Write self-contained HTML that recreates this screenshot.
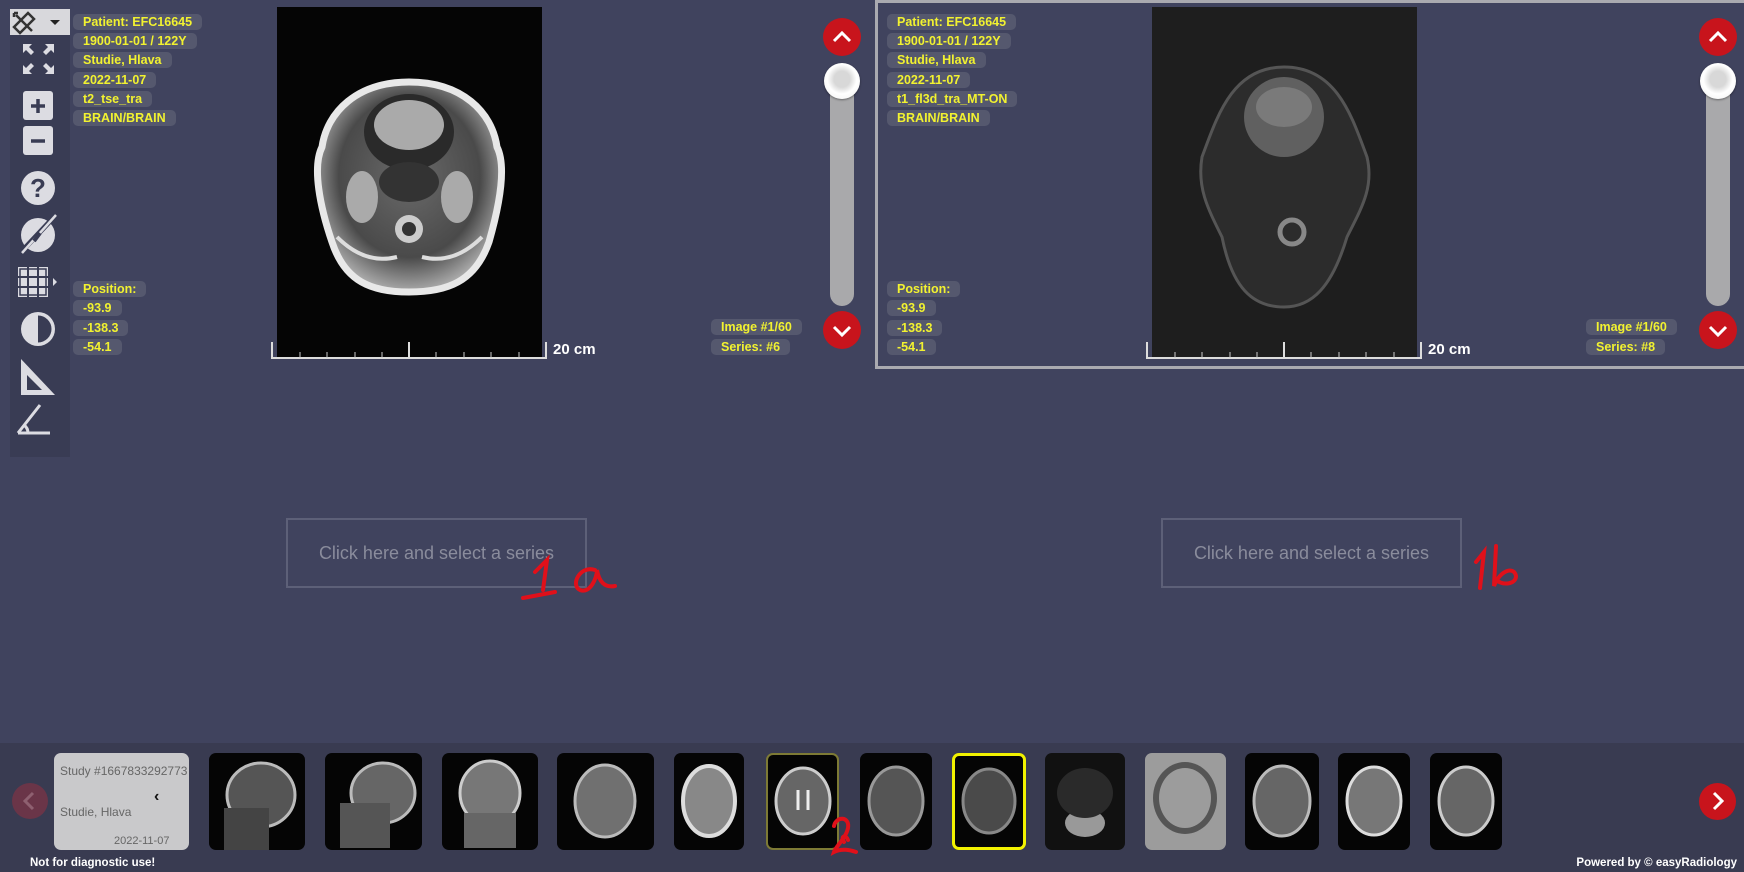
<!DOCTYPE html>
<html><head><meta charset="utf-8">
<style>
*{margin:0;padding:0;box-sizing:border-box}
body{width:1744px;height:872px;background:#40435e;font-family:"Liberation Sans",sans-serif;position:relative;overflow:hidden}
.abs{position:absolute}
.lbl{position:absolute;height:16px;line-height:16px;padding:0 10px;background:#55586e;border-radius:5px;color:#f2f230;font-size:12.5px;font-weight:bold;white-space:nowrap}
.tb{position:absolute;left:10px;top:9px;width:60px;height:448px;background:#393c54}
.red{position:absolute;width:38px;height:38px;border-radius:50%;background:#c8141c}
.track{position:absolute;width:24px;background:#a9a9ab;border-radius:12px}
.thumb{position:absolute;width:36px;height:36px;border-radius:50%;background:radial-gradient(circle at 50% 45%,#d8d8d8 0 30%,#fff 55%,#eee);box-shadow:0 1px 2px #0006}
.ph{position:absolute;width:301px;height:70px;border:2px solid #5d6078;color:#8a8c9c;font-size:18px;line-height:66px;text-align:center}
.bot{position:absolute;left:0;top:743px;width:1744px;height:129px;background:#393b51}
.th{position:absolute;top:753px;height:97px;border-radius:7px;background:#050505;overflow:hidden}
</style></head><body>

<div class="tb">
 <div class="abs" style="left:0;top:0;width:60px;height:26px;background:#d8d8dc"></div>
 <svg class="abs" style="left:0;top:0" width="60" height="448" viewBox="0 0 60 448">
  <g stroke="#333" stroke-width="2.5" fill="none"><path d="M4 18 L18 4 L24 10 L10 24Z"/><path d="M6 6 L22 22"/><path d="M4 4 l4 0 M4 4 l0 4"/></g>
  <path d="M40 11 h10 l-5 5z" fill="#222"/>
  <g fill="#dcdce2">
   <path d="M13 35 h9 l-3 3 5 5 -3 3 -5 -5 -3 3z"/><path d="M44 35 h-9 l3 3 -5 5 3 3 5 -5 3 3z"/>
   <path d="M13 65 h9 l-3 -3 5 -5 -3 -3 -5 5 -3 -3z"/><path d="M44 65 h-9 l3 -3 -5 -5 3 -3 5 5 3 -3z"/>
   <rect x="13" y="82" width="30" height="29" rx="3"/><rect x="13" y="117" width="30" height="29" rx="3"/>
   <circle cx="28" cy="179" r="17"/><circle cx="28" cy="226" r="17"/>
   <rect x="8" y="258" width="30" height="30"/>
   <circle cx="28" cy="320" r="17"/>
   <path d="M11 350 L45 386 H11Z"/>
  </g>
  <g stroke="#393c54" stroke-width="3.5" fill="none"><path d="M28 90 v14 M21 97 h14"/><path d="M21 132 h14"/></g>
  <text x="28" y="188" text-anchor="middle" font-size="26" font-weight="bold" fill="#393c54" font-family="Liberation Sans">?</text>
  <path d="M14 240 L44 208" stroke="#393c54" stroke-width="5"/><path d="M12 244 L46 206" stroke="#dcdce2" stroke-width="2.5"/>
  <path d="M24 232 l6 -8" stroke="#393c54" stroke-width="4"/>
  <g stroke="#393c54" stroke-width="2"><path d="M18 258 v30 M28 258 v30 M8 268 h30 M8 278 h30"/></g>
  <rect x="10" y="260" width="26" height="26" fill="none" stroke="#393c54" stroke-width="1.5"/>
  <path d="M43 269 l4 4 -4 4z" fill="#dcdce2"/>
  <path d="M28 305 a15 15 0 0 1 0 30z" fill="#393c54"/><circle cx="28" cy="320" r="15" fill="none" stroke="#dcdce2" stroke-width="3"/>
  <path d="M17 366 L32 381 H17Z" fill="#393c54"/>
  <path d="M8 424 L30 396 M8 424 H40 M18 424 a10 10 0 0 0 -4 -8" stroke="#dcdce2" stroke-width="3" fill="none"/>
 </svg>
</div>

<div class="lbl" style="left:73px;top:14px">Patient: EFC16645</div>
<div class="lbl" style="left:73px;top:33px">1900-01-01 / 122Y</div>
<div class="lbl" style="left:73px;top:52px">Studie, Hlava</div>
<div class="lbl" style="left:73px;top:72px">2022-11-07</div>
<div class="lbl" style="left:73px;top:91px">t2_tse_tra</div>
<div class="lbl" style="left:73px;top:110px">BRAIN/BRAIN</div>
<div class="lbl" style="left:73px;top:281px">Position:</div>
<div class="lbl" style="left:73px;top:300px">-93.9</div>
<div class="lbl" style="left:73px;top:320px">-138.3</div>
<div class="lbl" style="left:73px;top:339px">-54.1</div>

<svg class="abs" style="left:277px;top:7px" width="265" height="351" viewBox="0 0 265 351">
 <defs><radialGradient id="g1" cx="50%" cy="45%" r="55%"><stop offset="0" stop-color="#6a6a6a"/><stop offset=".7" stop-color="#4a4a4a"/><stop offset="1" stop-color="#aaa"/></radialGradient></defs>
 <rect width="265" height="351" fill="#050505"/>
 <path d="M132 75 C185 75 215 105 220 140 C230 160 222 200 212 235 C198 275 170 285 132 285 C95 285 68 275 55 235 C43 200 35 160 45 140 C50 105 80 75 132 75Z" fill="url(#g1)" stroke="#e8e8e8" stroke-width="7"/>
 <ellipse cx="132" cy="125" rx="45" ry="38" fill="#2a2a2a"/>
 <ellipse cx="132" cy="118" rx="35" ry="25" fill="#aaa"/>
 <ellipse cx="132" cy="175" rx="30" ry="20" fill="#333"/>
 <circle cx="132" cy="222" r="14" fill="#ccc"/><circle cx="132" cy="222" r="7" fill="#333"/>
 <ellipse cx="85" cy="190" rx="16" ry="26" fill="#aaa"/><ellipse cx="180" cy="190" rx="16" ry="26" fill="#aaa"/>
 <path d="M60 230 C80 250 100 255 120 250 M205 230 C185 250 165 255 145 250" stroke="#ddd" stroke-width="4" fill="none"/>
</svg>
<svg class="abs" style="left:270px;top:340px" width="280" height="20"><g stroke="#ddd" stroke-width="2" fill="none"><path d="M2 2 V18 H276 V2"/><path d="M139 2V18"/></g><g stroke="#ccc" stroke-width="1"><path d="M30 12V18M57 12V18M85 12V18M112 12V18M166 12V18M194 12V18M221 12V18M249 12V18"/></g></svg>
<div class="abs" style="left:553px;top:341px;color:#fff;font-size:15px;font-weight:bold">20 cm</div>

<div class="red" style="left:823px;top:18px"></div>
<svg class="abs" style="left:823px;top:18px" width="38" height="38"><path d="M11 23 L19 15 L27 23" stroke="#fff" stroke-width="3" fill="none"/></svg>
<div class="track" style="left:830px;top:70px;height:236px"></div>
<div class="thumb" style="left:824px;top:63px"></div>
<div class="red" style="left:823px;top:311px"></div>
<svg class="abs" style="left:823px;top:311px" width="38" height="38"><path d="M11 16 L19 24 L27 16" stroke="#fff" stroke-width="3" fill="none"/></svg>
<div class="lbl" style="left:711px;top:319px">Image #1/60</div>
<div class="lbl" style="left:711px;top:339px">Series: #6</div>

<div class="abs" style="left:875px;top:0;width:869px;height:369px;border:3px solid #aaaab0;border-right:none"></div>
<div class="lbl" style="left:887px;top:14px">Patient: EFC16645</div>
<div class="lbl" style="left:887px;top:33px">1900-01-01 / 122Y</div>
<div class="lbl" style="left:887px;top:52px">Studie, Hlava</div>
<div class="lbl" style="left:887px;top:72px">2022-11-07</div>
<div class="lbl" style="left:887px;top:91px">t1_fl3d_tra_MT-ON</div>
<div class="lbl" style="left:887px;top:110px">BRAIN/BRAIN</div>
<div class="lbl" style="left:887px;top:281px">Position:</div>
<div class="lbl" style="left:887px;top:300px">-93.9</div>
<div class="lbl" style="left:887px;top:320px">-138.3</div>
<div class="lbl" style="left:887px;top:339px">-54.1</div>
<svg class="abs" style="left:1152px;top:7px" width="265" height="351" viewBox="0 0 265 351">
 <rect width="265" height="351" fill="#1e1e1e"/>
 <path d="M132 60 C185 60 200 110 215 150 C222 180 210 200 195 230 C180 280 160 300 132 300 C100 300 80 280 70 230 C55 200 45 180 50 150 C65 110 80 60 132 60Z" fill="#2c2c2c" stroke="#555" stroke-width="3"/>
 <ellipse cx="132" cy="110" rx="40" ry="40" fill="#606060"/>
 <ellipse cx="132" cy="100" rx="28" ry="20" fill="#7a7a7a"/>
 <circle cx="140" cy="225" r="12" fill="none" stroke="#888" stroke-width="5"/>
</svg>
<svg class="abs" style="left:1145px;top:340px" width="280" height="20"><g stroke="#ddd" stroke-width="2" fill="none"><path d="M2 2 V18 H276 V2"/><path d="M139 2V18"/></g><g stroke="#ccc" stroke-width="1"><path d="M30 12V18M57 12V18M85 12V18M112 12V18M166 12V18M194 12V18M221 12V18M249 12V18"/></g></svg>
<div class="abs" style="left:1428px;top:341px;color:#fff;font-size:15px;font-weight:bold">20 cm</div>
<div class="red" style="left:1699px;top:18px"></div>
<svg class="abs" style="left:1699px;top:18px" width="38" height="38"><path d="M11 23 L19 15 L27 23" stroke="#fff" stroke-width="3" fill="none"/></svg>
<div class="track" style="left:1706px;top:70px;height:236px"></div>
<div class="thumb" style="left:1700px;top:63px"></div>
<div class="red" style="left:1699px;top:311px"></div>
<svg class="abs" style="left:1699px;top:311px" width="38" height="38"><path d="M11 16 L19 24 L27 16" stroke="#fff" stroke-width="3" fill="none"/></svg>
<div class="lbl" style="left:1586px;top:319px">Image #1/60</div>
<div class="lbl" style="left:1586px;top:339px">Series: #8</div>

<div class="ph" style="left:286px;top:518px">Click here and select a series</div>
<div class="ph" style="left:1161px;top:518px">Click here and select a series</div>
<svg class="abs" style="left:515px;top:550px" width="110" height="55"><g stroke="#e0101a" stroke-width="4" fill="none" stroke-linecap="round"><path d="M20 22 L32 10 L28 40 M8 48 L40 42"/><path d="M80 20 C65 15 55 35 65 40 C75 44 82 28 82 20 C84 32 90 38 100 36"/></g></svg>
<svg class="abs" style="left:1470px;top:540px" width="60" height="55"><g stroke="#e0101a" stroke-width="4" fill="none" stroke-linecap="round"><path d="M6 22 L14 12 L10 48"/><path d="M26 6 L24 46 C30 30 44 26 46 36 C46 44 34 46 26 40"/></g></svg>

<div class="bot"></div>
<div class="abs" style="left:12px;top:783px;width:36px;height:36px;border-radius:50%;background:#6a3548"></div>
<svg class="abs" style="left:12px;top:783px" width="36" height="36"><path d="M21 10 L13 18 L21 26" stroke="#8e6070" stroke-width="3" fill="none"/></svg>
<div class="abs" style="left:54px;top:753px;width:135px;height:97px;border-radius:7px;background:#c9c9cb;color:#666;font-size:12px">
 <div class="abs" style="left:6px;top:11px;white-space:nowrap;width:129px;overflow:hidden">Study #1667833292773</div>
 <div class="abs" style="left:6px;top:52px">Studie, Hlava</div>
 <div class="abs" style="left:100px;top:35px;color:#111;font-size:16px;font-weight:bold">‹</div>
 <div class="abs" style="left:60px;top:82px;font-size:11px">2022-11-07</div>
</div>
<div class="th" style="left:209px;width:96px"><svg width="96" height="97"><ellipse cx="52" cy="42" rx="34" ry="32" fill="#555" stroke="#bbb" stroke-width="3"/><rect x="15" y="55" width="45" height="42" fill="#444"/></svg></div>
<div class="th" style="left:325px;width:97px"><svg width="97" height="97"><ellipse cx="58" cy="40" rx="32" ry="30" fill="#666" stroke="#bbb" stroke-width="3"/><rect x="15" y="50" width="50" height="45" fill="#555"/></svg></div>
<div class="th" style="left:442px;width:96px"><svg width="96" height="97"><ellipse cx="48" cy="40" rx="30" ry="32" fill="#777" stroke="#ccc" stroke-width="3"/><rect x="22" y="60" width="52" height="35" fill="#666"/></svg></div>
<div class="th" style="left:557px;width:97px"><svg width="97" height="97"><ellipse cx="48" cy="48" rx="30" ry="36" fill="#707070" stroke="#bbb" stroke-width="3"/></svg></div>
<div class="th" style="left:674px;width:70px"><svg width="70" height="97"><ellipse cx="35" cy="48" rx="26" ry="35" fill="#888" stroke="#ddd" stroke-width="4"/></svg></div>
<div class="th" style="left:766px;width:73px;border:2px solid #7d7a35"><svg width="70" height="93"><ellipse cx="35" cy="46" rx="27" ry="33" fill="#666" stroke="#ccc" stroke-width="3"/><path d="M30 35v20M40 35v20" stroke="#eee" stroke-width="3"/></svg></div>
<div class="th" style="left:860px;width:72px"><svg width="72" height="97"><ellipse cx="36" cy="48" rx="27" ry="34" fill="#555" stroke="#999" stroke-width="3"/></svg></div>
<div class="th" style="left:952px;width:74px;border:3px solid #f2f200"><svg width="68" height="91"><ellipse cx="34" cy="45" rx="26" ry="32" fill="#4a4a4a" stroke="#888" stroke-width="3"/></svg></div>
<div class="th" style="left:1045px;width:80px;background:#111"><svg width="80" height="97"><ellipse cx="40" cy="70" rx="20" ry="14" fill="#999"/><ellipse cx="40" cy="40" rx="28" ry="25" fill="#2a2a2a"/></svg></div>
<div class="th" style="left:1145px;width:81px;background:#9c9c9c"><svg width="81" height="97"><ellipse cx="40" cy="45" rx="32" ry="36" fill="#555"/><ellipse cx="40" cy="45" rx="26" ry="30" fill="#ccc" opacity=".6"/></svg></div>
<div class="th" style="left:1245px;width:74px"><svg width="74" height="97"><ellipse cx="37" cy="48" rx="28" ry="35" fill="#666" stroke="#bbb" stroke-width="3"/></svg></div>
<div class="th" style="left:1338px;width:72px"><svg width="72" height="97"><ellipse cx="36" cy="48" rx="27" ry="34" fill="#777" stroke="#ddd" stroke-width="3"/></svg></div>
<div class="th" style="left:1430px;width:72px"><svg width="72" height="97"><ellipse cx="36" cy="48" rx="27" ry="34" fill="#666" stroke="#ccc" stroke-width="3"/></svg></div>
<svg class="abs" style="left:826px;top:812px" width="35" height="45"><path d="M8 14 C10 4 24 4 22 16 C20 26 10 34 8 40 C16 36 24 38 30 40 M18 30 C14 24 20 22 22 28" stroke="#e0101a" stroke-width="4" fill="none" stroke-linecap="round"/></svg>
<div class="red" style="left:1699px;top:783px;width:37px;height:37px"></div>
<svg class="abs" style="left:1699px;top:783px" width="37" height="37"><path d="M15 10 L23 18 L15 26" stroke="#fff" stroke-width="3" fill="none"/></svg>
<div class="abs" style="left:30px;top:857px;color:#fff;font-size:11.5px;font-weight:bold">Not for diagnostic use!</div>
<div class="abs" style="right:7px;top:857px;color:#fff;font-size:11.5px;font-weight:bold">Powered by © easyRadiology</div>
</body></html>
